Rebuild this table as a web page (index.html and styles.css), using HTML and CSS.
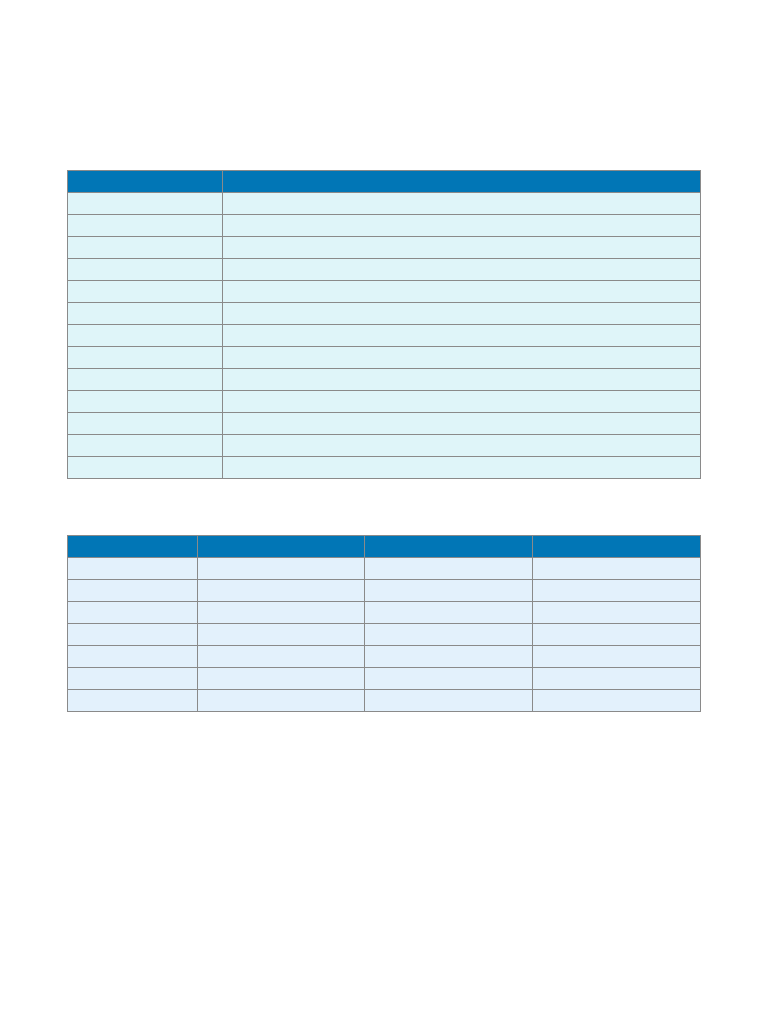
FILE: index.html
```html
<!DOCTYPE html>
<html>
<head>
<meta charset="utf-8">
<link rel="stylesheet" href="styles.css">
</head>
<body>
<div class="page">
  <table class="grid grid-a">
    <colgroup><col class="a1"><col></colgroup>
    <thead><tr><th></th><th></th></tr></thead>
    <tbody>
      <tr><td></td><td></td></tr>
      <tr><td></td><td></td></tr>
      <tr><td></td><td></td></tr>
      <tr><td></td><td></td></tr>
      <tr><td></td><td></td></tr>
      <tr><td></td><td></td></tr>
      <tr><td></td><td></td></tr>
      <tr><td></td><td></td></tr>
      <tr><td></td><td></td></tr>
      <tr><td></td><td></td></tr>
      <tr><td></td><td></td></tr>
      <tr><td></td><td></td></tr>
      <tr><td></td><td></td></tr>
    </tbody>
  </table>
  <table class="grid grid-b">
    <colgroup><col class="b1"><col class="b2"><col class="b3"><col></colgroup>
    <thead><tr><th></th><th></th><th></th><th></th></tr></thead>
    <tbody>
      <tr><td></td><td></td><td></td><td></td></tr>
      <tr><td></td><td></td><td></td><td></td></tr>
      <tr><td></td><td></td><td></td><td></td></tr>
      <tr><td></td><td></td><td></td><td></td></tr>
      <tr><td></td><td></td><td></td><td></td></tr>
      <tr><td></td><td></td><td></td><td></td></tr>
      <tr><td></td><td></td><td></td><td></td></tr>
    </tbody>
  </table>
</div>
</body>
</html>
```
FILE: styles.css
```css
html, body {
  margin: 0;
  padding: 0;
  background: #ffffff;
  font-family: "Liberation Sans", Arial, sans-serif;
}
.page {
  padding: 170px 0 0 67px;
  display: flex;
  flex-direction: column;
  gap: 56px;
}
.grid {
  border-collapse: collapse;
  table-layout: fixed;
  width: 634px;
}
.grid th, .grid td {
  border: 1px solid #8a8a8a;
  padding: 0;
  height: 22px;
  box-sizing: border-box;
}
.grid th {
  background: #0176b6;
}
.grid-a td {
  background: #dff5f9;
}
.grid-b td {
  background: #e3f1fc;
}
.a1 { width: 155px; }
.b1 { width: 130px; }
.b2 { width: 167px; }
.b3 { width: 168px; }
```
